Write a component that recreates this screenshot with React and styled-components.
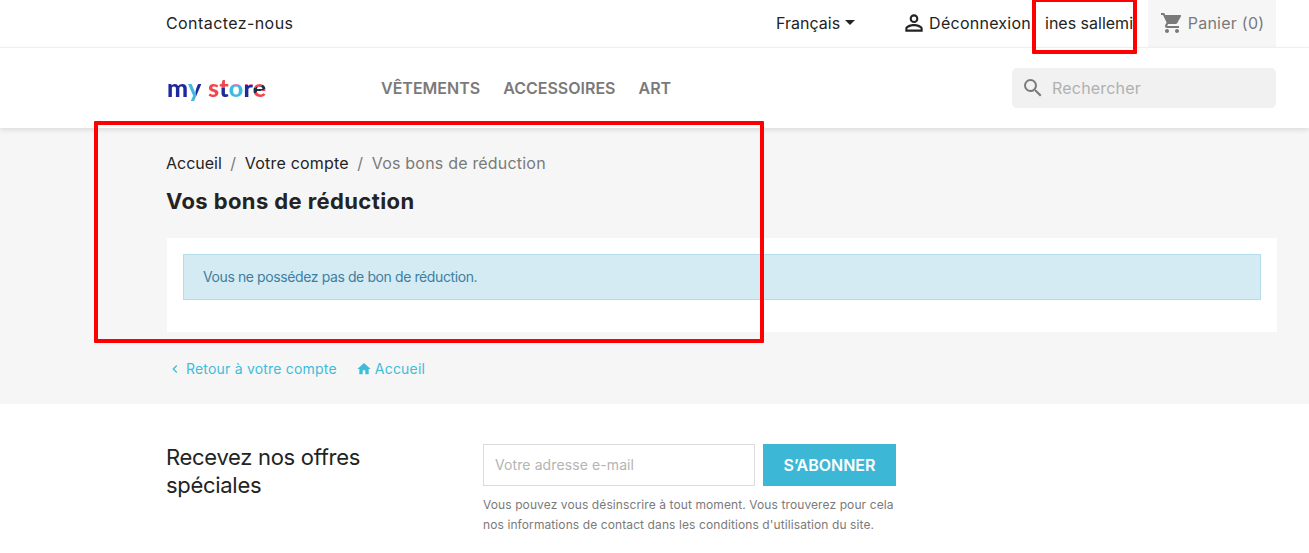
import React from "react";
import styled, { createGlobalStyle } from "styled-components";

const Global = createGlobalStyle`
  html, body { margin: 0; padding: 0; background: #fff; }
  body { font-family: Inter, "Open Sans", "Liberation Sans", sans-serif; color: #232323; overflow: hidden; }
  * { box-sizing: border-box; }
`;

const Page = styled.div`
  position: relative;
  width: 1309px;
  height: 553px;
  overflow: hidden;
`;

const TopBar = styled.div`
  height: 48px;
  padding: 0 33px 2px 167px;
  display: flex;
  align-items: center;
  border-bottom: 1px solid #f3f3f3;
  font-size: 16px;
  letter-spacing: 0.25px;
`;

const TopLink = styled.span`
  margin-right: auto;
  margin-left: -1px;
  letter-spacing: 0.42px;
  color: #232323;
`;

const Lang = styled.span`
  display: flex;
  align-items: center;
  gap: 5px;
  margin-right: 46px;
  letter-spacing: 0;
`;

const Caret = styled.span`
  width: 0;
  height: 0;
  border-left: 5px solid transparent;
  border-right: 5px solid transparent;
  border-top: 5px solid #232323;
`;

const Account = styled.span`
  display: flex;
  align-items: center;
  gap: 2px;
  margin-right: 14px;
`;

const UserName = styled.span`
  margin-right: 15px;
  letter-spacing: 0;
`;

const Cart = styled.div`
  align-self: flex-start;
  width: 128px;
  height: 47px;
  padding-bottom: 2px;
  background: #f6f6f6;
  color: #7a7a7a;
  display: flex;
  align-items: center;
  justify-content: center;
  gap: 4px;
`;

const Header = styled.header`
  position: relative;
  height: 80px;
  padding: 0 33px 0 167px;
  display: flex;
  align-items: center;
  background: #fff;
  box-shadow: 0 2px 5px rgba(0, 0, 0, 0.11);
`;

const Logo = styled.div`
  width: 214px;
  font-family: Lato, "Open Sans", sans-serif;
  font-size: 25px;
  font-weight: 900;
  letter-spacing: 0.2px;
  word-spacing: 1px;
  line-height: 1;
  white-space: nowrap;
  padding-bottom: 2px;
`;

const LogoPart = styled.span`
  color: transparent;
  background: ${(p) => p.$bg};
  -webkit-background-clip: text;
  background-clip: text;
`;

const Nav = styled.nav`
  display: flex;
  gap: 23px;
  margin-right: auto;
`;

const NavItem = styled.span`
  font-size: 16px;
  font-weight: 600;
  color: #7a7a7a;
`;

const Search = styled.div`
  width: 264px;
  height: 40px;
  border-radius: 5px;
  background: #f1f1f1;
  display: flex;
  align-items: center;
  gap: 7px;
  padding-left: 9px;
  font-size: 16px;
  letter-spacing: 0.2px;
  color: #b0b0b0;
`;

const Main = styled.main`
  height: 276px;
  background: #f6f6f6;
  padding: 25px 32px 0 167px;
`;

const Crumbs = styled.div`
  display: flex;
  gap: 8.5px;
  margin-left: -1px;
  font-size: 16px;
  line-height: 20px;
  letter-spacing: 0.2px;
  color: #232323;
`;

const CrumbHome = styled.span`
  letter-spacing: 0;
`;

const Sep = styled.span`
  color: #7a7a7a;
`;

const CrumbNow = styled.span`
  color: #7a7a7a;
`;

const Title = styled.h1`
  margin: 13px 0 0 -1px;
  font-size: 22px;
  line-height: 30px;
  font-weight: 700;
  letter-spacing: 0.4px;
  color: #232323;
`;

const Card = styled.section`
  margin-top: 22px;
  height: 94px;
  padding: 16px;
  background: #fff;
`;

const Alert = styled.div`
  height: 46px;
  padding: 0 0 2px 19px;
  display: flex;
  align-items: center;
  background: #d5ebf4;
  border: 1px solid #b5dcec;
  color: #3d7f9f;
  font-size: 14px;
  letter-spacing: -0.4px;
`;

const Links = styled.div`
  display: flex;
  gap: 19px;
  margin-top: 27px;
  font-size: 14px;
  line-height: 20px;
  letter-spacing: 0.2px;
  color: #3ebcd9;
`;

const BackLink = styled.span`
  display: flex;
  align-items: center;
  gap: 3px;
`;

const Footer = styled.footer`
  display: flex;
  padding: 40px 0 0 167px;
`;

const FooterTitle = styled.h2`
  margin: -1px 0 0 -1px;
  width: 317px;
  font-size: 22px;
  line-height: 28px;
  font-weight: 400;
  color: #232323;
  letter-spacing: -0.3px;
`;

const FormRow = styled.div`
  display: flex;
  gap: 8px;
`;

const Email = styled.div`
  width: 272px;
  height: 42px;
  padding: 0 0 2px 11px;
  display: flex;
  align-items: center;
  border: 1px solid #dcdcdc;
  font-size: 14px;
  letter-spacing: 0.1px;
  color: #b4b4b4;
`;

const Subscribe = styled.div`
  width: 133px;
  height: 42px;
  display: flex;
  align-items: center;
  justify-content: center;
  background: #3cb8d6;
  color: #fff;
  font-size: 16px;
  font-weight: 600;
`;

const Note = styled.p`
  margin: 9px 0 0;
  font-size: 12px;
  line-height: 20px;
  letter-spacing: 0.1px;
  color: #7a7a7a;
  white-space: nowrap;
`;

const Annotation = styled.div`
  position: absolute;
  left: ${(p) => p.$x}px;
  top: ${(p) => p.$y}px;
  width: ${(p) => p.$w}px;
  height: ${(p) => p.$h}px;
  border: 4px solid #ff0000;
  border-radius: 1px;
  pointer-events: none;
`;

const UserIcon = () => (
  <svg width="26" height="26" viewBox="0 0 24 24" fill="#232323">
    <path d="M12 5.9a2.1 2.1 0 1 1 0 4.2 2.1 2.1 0 0 1 0-4.2m0 9c2.97 0 6.1 1.46 6.1 2.1v1.1H5.9V17c0-.64 3.13-2.1 6.1-2.1M12 4a4 4 0 1 0 0 8 4 4 0 0 0 0-8zm0 9c-2.67 0-8 1.34-8 4v3h16v-3c0-2.66-5.33-4-8-4z" />
  </svg>
);

const CartIcon = () => (
  <svg width="24" height="24" viewBox="0 0 24 24" fill="#7a7a7a">
    <path d="M7 18c-1.1 0-1.99.9-1.99 2S5.9 22 7 22s2-.9 2-2-.9-2-2-2zM1 2v2h2l3.6 7.59-1.35 2.45c-.16.28-.25.61-.25.96 0 1.1.9 2 2 2h12v-2H7.42c-.14 0-.25-.11-.25-.25l.03-.12.9-1.63h7.45c.75 0 1.41-.41 1.75-1.03l3.58-6.49A1 1 0 0 0 20 4H5.21l-.94-2H1zm16 16c-1.1 0-1.99.9-1.99 2s.89 2 1.99 2 2-.9 2-2-.9-2-2-2z" />
  </svg>
);

const SearchIcon = () => (
  <svg width="24" height="24" viewBox="0 0 24 24" fill="#7a7a7a">
    <path d="M15.5 14h-.79l-.28-.27A6.47 6.47 0 0 0 16 9.5 6.5 6.5 0 1 0 9.5 16c1.61 0 3.09-.59 4.23-1.57l.27.28v.79l5 4.99L20.49 19l-4.99-5zm-6 0C7.01 14 5 11.99 5 9.5S7.01 5 9.5 5 14 7.01 14 9.5 11.99 14 9.5 14z" />
  </svg>
);

const ChevronIcon = () => (
  <svg width="16" height="16" viewBox="0 0 24 24" fill="#3ebcd9">
    <path d="M15.41 7.41 14 6l-6 6 6 6 1.41-1.41L10.83 12z" />
  </svg>
);

const HomeIcon = () => (
  <svg width="16" height="16" viewBox="0 0 24 24" fill="#3ebcd9">
    <path d="M10 20v-6h4v6h5v-8h3L12 3 2 12h3v8z" />
  </svg>
);

export default function App() {
  return (
    <Page>
      <Global />
      <TopBar>
        <TopLink>Contactez-nous</TopLink>
        <Lang>Français <Caret /></Lang>
        <Account><UserIcon />Déconnexion</Account>
        <UserName>ines sallemi</UserName>
        <Cart><CartIcon />Panier (0)</Cart>
      </TopBar>
      <Header>
        <Logo>
          <LogoPart $bg="linear-gradient(180deg, #4cc3e6 0 38%, #1f2a9a 38%)">m</LogoPart>
          <LogoPart $bg="linear-gradient(90deg, #3fb9e0 0 62%, #1f2a9a 62%)">y</LogoPart>{" "}
          <LogoPart $bg="#f0474f">s</LogoPart>
          <LogoPart $bg="linear-gradient(180deg, #f0474f 0 55%, #1f2a9a 55%)">t</LogoPart>
          <LogoPart $bg="linear-gradient(180deg, #e86aa8 0 45%, #3fb9e0 45%)">o</LogoPart>
          <LogoPart $bg="linear-gradient(180deg, #e86aa8 0 45%, #1f2a9a 45%)">r</LogoPart>
          <LogoPart $bg="linear-gradient(160deg, #f0474f 0 48%, #17324d 48% 62%, #f0474f 62%)">e</LogoPart>
        </Logo>
        <Nav>
          <NavItem>VÊTEMENTS</NavItem>
          <NavItem>ACCESSOIRES</NavItem>
          <NavItem>ART</NavItem>
        </Nav>
        <Search><SearchIcon />Rechercher</Search>
      </Header>
      <Main>
        <Crumbs>
          <CrumbHome>Accueil</CrumbHome><Sep>/</Sep>
          <span>Votre compte</span><Sep>/</Sep>
          <CrumbNow>Vos bons de réduction</CrumbNow>
        </Crumbs>
        <Title>Vos bons de réduction</Title>
        <Card>
          <Alert>Vous ne possédez pas de bon de réduction.</Alert>
        </Card>
        <Links>
          <BackLink><ChevronIcon />Retour à votre compte</BackLink>
          <BackLink><HomeIcon />Accueil</BackLink>
        </Links>
      </Main>
      <Footer>
        <FooterTitle>Recevez nos offres<br />spéciales</FooterTitle>
        <div>
          <FormRow>
            <Email>Votre adresse e-mail</Email>
            <Subscribe>S’ABONNER</Subscribe>
          </FormRow>
          <Note>
            Vous pouvez vous désinscrire à tout moment. Vous trouverez pour cela<br />
            nos informations de contact dans les conditions d'utilisation du site.
          </Note>
        </div>
      </Footer>
      <Annotation $x={1032} $y={-2} $w={105} $h={56} />
      <Annotation $x={94} $y={121} $w={670} $h={222} />
    </Page>
  );
}
